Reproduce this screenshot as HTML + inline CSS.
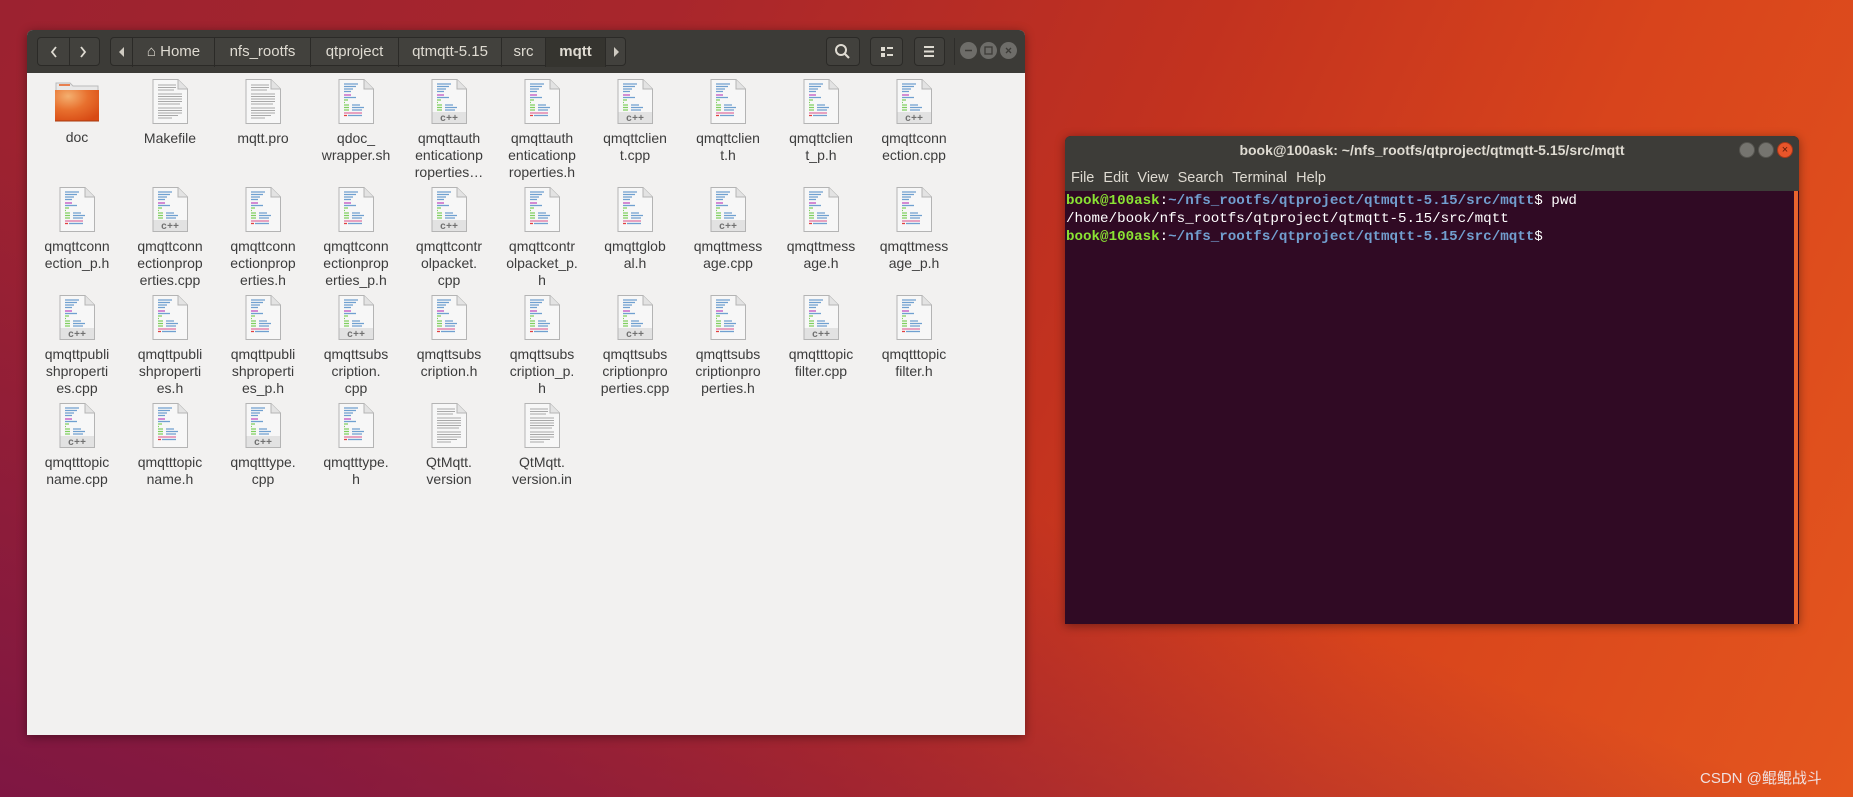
<!DOCTYPE html>
<html><head><meta charset="utf-8"><style>
*{margin:0;padding:0;box-sizing:border-box}
body{width:1853px;height:797px;overflow:hidden;position:relative;font-family:"Liberation Sans","Noto Sans CJK SC",sans-serif;
background:linear-gradient(115deg,#9c2230 0%,#a8262c 30%,#c2321f 55%,#d8441c 75%,#e4561e 100%)}
.bgshade{position:absolute;left:0;top:0;width:1853px;height:797px;background:linear-gradient(20deg,rgba(120,20,70,.85) 0%,rgba(120,20,70,0) 45%)}
.fm{position:absolute;left:27px;top:30px;width:998px;height:705px;background:#f2f1f0;border-radius:6px 6px 0 0;overflow:hidden;box-shadow:0 2px 10px rgba(0,0,0,.4)}
.hd{position:absolute;left:0;top:0;width:998px;height:43px;background:#3c3b37}
.btn{position:absolute;top:7px;height:29px;border:1px solid #2b2a27;background:#42413d;border-radius:4px}
.seg{position:absolute;top:0;height:29px;line-height:28px;color:#dfdbd2;font-size:15px;text-align:center;border-right:1px solid #2b2a27}
.c{position:absolute;width:94px;text-align:center;font-size:14px;line-height:17px;color:#3c3c3c}
.c svg{display:block;margin:0 auto 5px}
.term{position:absolute;left:1065px;top:136px;width:734px;height:488px;background:#300a24;border-radius:6px 6px 0 0;overflow:hidden;box-shadow:0 2px 10px rgba(0,0,0,.4)}
.tt{height:29px;background:#3d3c38;color:#dfdbd2;font-size:14px;font-weight:bold;text-align:center;line-height:29px}
.mn{height:26px;background:#3d3c38;color:#dfdbd2;font-size:14.5px;line-height:26px;padding-left:6px;word-spacing:5px}
.tx{font-family:"Liberation Mono",monospace;font-size:14.2px;line-height:18px;color:#fff;padding:1px 0 0 1px;white-space:pre}
.g{color:#8ae234;font-weight:bold}.b{color:#729fcf;font-weight:bold}
.wc{position:absolute;width:17px;height:17px;border-radius:50%;background:#6e6d69;top:13px}
</style></head><body>
<div class="bgshade"></div>
<svg width="0" height="0" style="position:absolute"><defs>
<g id="code"><path d="M1 .5h25l9.5 9.5v34.5H1z" fill="#f7f7f7" stroke="#b4b4b4"/><path d="M26 .5v9.5h9.5" fill="#e3e3e3" stroke="#b4b4b4"/>
<g stroke-width="1.3"><path d="M6 5h14M6 7.5h12M6 10h9M6 12.5h7" stroke="#6fa0d0"/><path d="M6 16h7" stroke="#c050c0"/><path d="M6 18.5h12" stroke="#6fa0d0"/><path d="M6 21h4M6 23.5h1" stroke="#7fcf5f"/><path d="M6 26h5M6 28.5h5M6 31h5" stroke="#7fcf5f"/><path d="M14 26h8M14 28.5h12M14 31h10" stroke="#6fa0d0"/><path d="M6 34h18" stroke="#e070a0"/><path d="M6 36.5h3" stroke="#e04040"/><path d="M10 36.5h14" stroke="#6fa0d0"/></g></g>
<g id="cpp"><path d="M1 .5h25l9.5 9.5v34.5H1z" fill="#f7f7f7" stroke="#b4b4b4"/><path d="M26 .5v9.5h9.5" fill="#e3e3e3" stroke="#b4b4b4"/><rect x="1.5" y="33" width="33.5" height="11" fill="#e2e2e2"/>
<g stroke-width="1.3"><path d="M6 5h14M6 7.5h12M6 10h9M6 12.5h7" stroke="#6fa0d0"/><path d="M6 16h7" stroke="#c050c0"/><path d="M6 18.5h12" stroke="#6fa0d0"/><path d="M6 21h4M6 23.5h1" stroke="#7fcf5f"/><path d="M6 26h5M6 28.5h5M6 31h5" stroke="#7fcf5f"/><path d="M14 26h8M14 28.5h12M14 31h10" stroke="#6fa0d0"/></g>
<text x="18" y="42" font-family="Liberation Mono,monospace" font-size="10" font-weight="bold" fill="#707070" text-anchor="middle">c++</text></g>
<g id="txt"><path d="M1 .5h25l9.5 9.5v34.5H1z" fill="#f7f7f7" stroke="#b4b4b4"/><path d="M26 .5v9.5h9.5" fill="#e3e3e3" stroke="#b4b4b4"/>
<path d="M6 6h18M6 8.5h18M6 11h16M6 15h24M6 17.5h24M6 20h24M6 22.5h24M6 25h22M6 29h24M6 31.5h24M6 34h24M6 36.5h20M6 39h14" stroke="#a8a8a8" stroke-width="1.1"/></g>
</defs></svg>
<div class="fm">
 <div class="hd">
  <div class="btn" style="left:10px;width:63px"><div style="position:absolute;left:31px;top:0;width:1px;height:27px;background:#2b2a27"></div>
   <svg width="61" height="27" style="position:absolute;left:0;top:0"><path d="M18 9l-4 5 4 5M43 9l4 5-4 5" stroke="#dfdbd2" stroke-width="1.8" fill="none"/></svg></div>
  <div class="btn" style="left:83px;width:516px">
   <div class="seg" style="left:0;width:22px"><svg width="10" height="27"><path d="M7 9v10l-5-5z" fill="#cfcbc2"/></svg></div>
   <div class="seg" style="left:22px;width:82px"><span style="font-size:15px">⌂</span> Home</div>
   <div class="seg" style="left:104px;width:96px">nfs_rootfs</div>
   <div class="seg" style="left:200px;width:88px">qtproject</div>
   <div class="seg" style="left:288px;width:103px">qtmqtt-5.15</div>
   <div class="seg" style="left:391px;width:44px">src</div>
   <div class="seg" style="left:435px;width:60px;background:#35342f;font-weight:bold">mqtt</div>
   <div class="seg" style="left:495px;width:20px;border:0"><svg width="10" height="27"><path d="M3 9v10l5-5z" fill="#cfcbc2"/></svg></div>
  </div>
  <div class="btn" style="left:799px;width:34px"><svg width="32" height="27"><circle cx="14" cy="12" r="5" stroke="#dfdbd2" stroke-width="2" fill="none"/><path d="M18 16l4 4" stroke="#dfdbd2" stroke-width="2.2"/></svg></div>
  <div class="btn" style="left:843px;width:33px"><svg width="31" height="27"><rect x="10" y="9" width="4" height="4" fill="#dfdbd2"/><rect x="10" y="15" width="4" height="4" fill="#dfdbd2"/><path d="M16 10h6M16 17h6" stroke="#dfdbd2" stroke-width="2"/></svg></div>
  <div class="btn" style="left:887px;width:31px"><svg width="29" height="27"><path d="M9 9h10M9 13.5h10M9 18h10" stroke="#dfdbd2" stroke-width="2"/></svg></div>
  <div style="position:absolute;left:927px;top:8px;width:1px;height:27px;background:#2e2d2a"></div>
  <div class="wc" style="left:933px;top:12px"><svg width="17" height="17"><path d="M5 8.5h7" stroke="#3c3b37" stroke-width="1.5"/></svg></div>
  <div class="wc" style="left:953px;top:12px"><svg width="17" height="17"><rect x="5" y="5" width="7" height="7" stroke="#3c3b37" stroke-width="1.3" fill="none"/></svg></div>
  <div class="wc" style="left:973px;top:12px"><svg width="17" height="17"><path d="M6 6l5 5M11 6l-5 5" stroke="#3c3b37" stroke-width="1.3"/></svg></div>
 </div>
 <!-- row1 top 49 (abs 79) -->
 <div class="c" style="left:3px;top:49px"><svg width="48" height="45" viewBox="0 0 48 45"><path d="M3 4h14l3 3h25v6H3z" fill="#e8e8e8" stroke="#bbb"/><rect x="6" y="5" width="11" height="2" fill="#e88050"/><defs><radialGradient id="fg" cx=".3" cy=".2" r=".9"><stop offset="0" stop-color="#f4b070"/><stop offset=".5" stop-color="#e8702e"/><stop offset="1" stop-color="#d84a14"/></radialGradient></defs><path d="M2 11h44v31H2z" fill="url(#fg)"/><path d="M2 42h44" stroke="#a83a10"/></svg>doc</div>
 <div class="c" style="left:96px;top:49px"><svg width="37" height="46"><use href="#txt"/></svg>Makefile</div>
 <div class="c" style="left:189px;top:49px"><svg width="37" height="46"><use href="#txt"/></svg>mqtt.pro</div>
 <div class="c" style="left:282px;top:49px"><svg width="37" height="46"><use href="#code"/></svg>qdoc_<br>wrapper.sh</div>
 <div class="c" style="left:375px;top:49px"><svg width="37" height="46"><use href="#cpp"/></svg>qmqttauth<br>enticationp<br>roperties…</div>
 <div class="c" style="left:468px;top:49px"><svg width="37" height="46"><use href="#code"/></svg>qmqttauth<br>enticationp<br>roperties.h</div>
 <div class="c" style="left:561px;top:49px"><svg width="37" height="46"><use href="#cpp"/></svg>qmqttclien<br>t.cpp</div>
 <div class="c" style="left:654px;top:49px"><svg width="37" height="46"><use href="#code"/></svg>qmqttclien<br>t.h</div>
 <div class="c" style="left:747px;top:49px"><svg width="37" height="46"><use href="#code"/></svg>qmqttclien<br>t_p.h</div>
 <div class="c" style="left:840px;top:49px"><svg width="37" height="46"><use href="#cpp"/></svg>qmqttconn<br>ection.cpp</div>
 <!-- row2 -->
 <div class="c" style="left:3px;top:157px"><svg width="37" height="46"><use href="#code"/></svg>qmqttconn<br>ection_p.h</div>
 <div class="c" style="left:96px;top:157px"><svg width="37" height="46"><use href="#cpp"/></svg>qmqttconn<br>ectionprop<br>erties.cpp</div>
 <div class="c" style="left:189px;top:157px"><svg width="37" height="46"><use href="#code"/></svg>qmqttconn<br>ectionprop<br>erties.h</div>
 <div class="c" style="left:282px;top:157px"><svg width="37" height="46"><use href="#code"/></svg>qmqttconn<br>ectionprop<br>erties_p.h</div>
 <div class="c" style="left:375px;top:157px"><svg width="37" height="46"><use href="#cpp"/></svg>qmqttcontr<br>olpacket.<br>cpp</div>
 <div class="c" style="left:468px;top:157px"><svg width="37" height="46"><use href="#code"/></svg>qmqttcontr<br>olpacket_p.<br>h</div>
 <div class="c" style="left:561px;top:157px"><svg width="37" height="46"><use href="#code"/></svg>qmqttglob<br>al.h</div>
 <div class="c" style="left:654px;top:157px"><svg width="37" height="46"><use href="#cpp"/></svg>qmqttmess<br>age.cpp</div>
 <div class="c" style="left:747px;top:157px"><svg width="37" height="46"><use href="#code"/></svg>qmqttmess<br>age.h</div>
 <div class="c" style="left:840px;top:157px"><svg width="37" height="46"><use href="#code"/></svg>qmqttmess<br>age_p.h</div>
 <!-- row3 -->
 <div class="c" style="left:3px;top:265px"><svg width="37" height="46"><use href="#cpp"/></svg>qmqttpubli<br>shproperti<br>es.cpp</div>
 <div class="c" style="left:96px;top:265px"><svg width="37" height="46"><use href="#code"/></svg>qmqttpubli<br>shproperti<br>es.h</div>
 <div class="c" style="left:189px;top:265px"><svg width="37" height="46"><use href="#code"/></svg>qmqttpubli<br>shproperti<br>es_p.h</div>
 <div class="c" style="left:282px;top:265px"><svg width="37" height="46"><use href="#cpp"/></svg>qmqttsubs<br>cription.<br>cpp</div>
 <div class="c" style="left:375px;top:265px"><svg width="37" height="46"><use href="#code"/></svg>qmqttsubs<br>cription.h</div>
 <div class="c" style="left:468px;top:265px"><svg width="37" height="46"><use href="#code"/></svg>qmqttsubs<br>cription_p.<br>h</div>
 <div class="c" style="left:561px;top:265px"><svg width="37" height="46"><use href="#cpp"/></svg>qmqttsubs<br>criptionpro<br>perties.cpp</div>
 <div class="c" style="left:654px;top:265px"><svg width="37" height="46"><use href="#code"/></svg>qmqttsubs<br>criptionpro<br>perties.h</div>
 <div class="c" style="left:747px;top:265px"><svg width="37" height="46"><use href="#cpp"/></svg>qmqtttopic<br>filter.cpp</div>
 <div class="c" style="left:840px;top:265px"><svg width="37" height="46"><use href="#code"/></svg>qmqtttopic<br>filter.h</div>
 <!-- row4 -->
 <div class="c" style="left:3px;top:373px"><svg width="37" height="46"><use href="#cpp"/></svg>qmqtttopic<br>name.cpp</div>
 <div class="c" style="left:96px;top:373px"><svg width="37" height="46"><use href="#code"/></svg>qmqtttopic<br>name.h</div>
 <div class="c" style="left:189px;top:373px"><svg width="37" height="46"><use href="#cpp"/></svg>qmqtttype.<br>cpp</div>
 <div class="c" style="left:282px;top:373px"><svg width="37" height="46"><use href="#code"/></svg>qmqtttype.<br>h</div>
 <div class="c" style="left:375px;top:373px"><svg width="37" height="46"><use href="#txt"/></svg>QtMqtt.<br>version</div>
 <div class="c" style="left:468px;top:373px"><svg width="37" height="46"><use href="#txt"/></svg>QtMqtt.<br>version.in</div>
</div>
<div class="term">
 <div class="tt">book@100ask: ~/nfs_rootfs/qtproject/qtmqtt-5.15/src/mqtt</div>
 <div style="position:absolute;left:674px;top:6px;width:16px;height:16px;border-radius:50%;background:#75746f;border:1px solid #55544f"></div>
 <div style="position:absolute;left:693px;top:6px;width:16px;height:16px;border-radius:50%;background:#75746f;border:1px solid #55544f"></div>
 <div style="position:absolute;left:712px;top:6px;width:16px;height:16px;border-radius:50%;background:#e9552a;border:1px solid #a8381a;color:#5a1a0a;font-size:11px;line-height:14px;text-align:center">×</div>
 <div class="mn">File Edit View Search Terminal Help</div>
 <div class="tx"><span class="g">book@100ask</span>:<span class="b">~/nfs_rootfs/qtproject/qtmqtt-5.15/src/mqtt</span>$ pwd
/home/book/nfs_rootfs/qtproject/qtmqtt-5.15/src/mqtt
<span class="g">book@100ask</span>:<span class="b">~/nfs_rootfs/qtproject/qtmqtt-5.15/src/mqtt</span>$ </div>
 <div style="position:absolute;right:1px;top:55px;width:4px;height:433px;background:#e9642e"></div>
</div>
<div style="position:absolute;left:1700px;top:767px;color:#f0e0e0;font-size:15px">CSDN @鲲鲲战斗</div>
</body></html>
